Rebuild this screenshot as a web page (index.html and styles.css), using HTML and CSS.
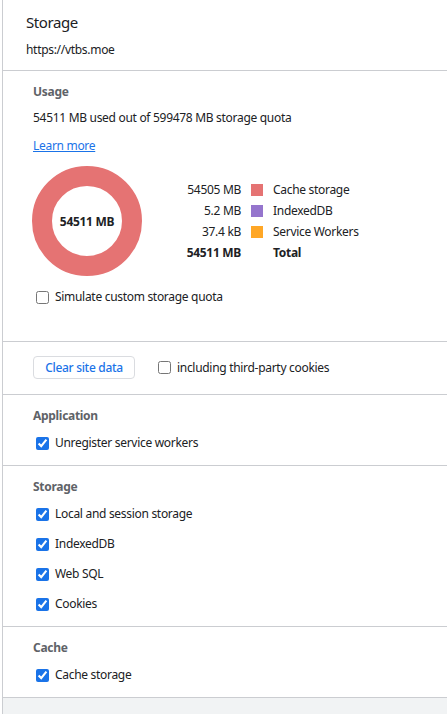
FILE: index.html
```html
<!DOCTYPE html>
<html>
<head>
<meta charset="utf-8">
<link rel="stylesheet" href="styles.css">
</head>
<body>
<div class="frame">
  <div class="report">
    <header class="report-header">
      <div class="report-title">Storage</div>
      <div class="report-url">https://vtbs.moe</div>
    </header>

    <section class="section usage">
      <div class="section-title">Usage</div>
      <div class="row text-row">54511 MB used out of 599478 MB storage quota</div>
      <div class="row link-row"><a class="link" href="#">Learn more</a></div>
      <div class="chart-row">
        <div class="donut"><span class="donut-label">54511 MB</span></div>
        <div class="legend">
          <span class="lv">54505 MB</span><span class="sw sw-cache"></span><span class="ll">Cache storage</span>
          <span class="lv">5.2 MB</span><span class="sw sw-idb"></span><span class="ll">IndexedDB</span>
          <span class="lv">37.4 kB</span><span class="sw sw-sw"></span><span class="ll">Service Workers</span>
          <span class="lv total">54511 MB</span><span class="sw"></span><span class="ll total">Total</span>
        </div>
      </div>
      <label class="row check-row quota-row"><input type="checkbox"><span>Simulate custom storage quota</span></label>
    </section>

    <section class="section clear">
      <button class="btn">Clear site data</button>
      <label class="check-row third"><input type="checkbox"><span>including third-party cookies</span></label>
    </section>

    <section class="section">
      <div class="section-title">Application</div>
      <div class="list">
        <label class="row check-row"><input type="checkbox" checked><span>Unregister service workers</span></label>
      </div>
    </section>

    <section class="section">
      <div class="section-title">Storage</div>
      <div class="list">
        <label class="row check-row"><input type="checkbox" checked><span>Local and session storage</span></label>
        <label class="row check-row"><input type="checkbox" checked><span>IndexedDB</span></label>
        <label class="row check-row"><input type="checkbox" checked><span>Web SQL</span></label>
        <label class="row check-row"><input type="checkbox" checked><span>Cookies</span></label>
      </div>
    </section>

    <section class="section">
      <div class="section-title">Cache</div>
      <div class="list">
        <label class="row check-row"><input type="checkbox" checked><span>Cache storage</span></label>
      </div>
    </section>
  </div>
</div>
</body>
</html>
```

FILE: styles.css
```css
html, body {
  margin: 0;
  padding: 0;
  height: 100%;
}
body {
  background: #ffffff;
  font-family: "Segoe UI", "Noto Sans", "Open Sans", sans-serif;
  font-size: 12px;
  letter-spacing: -0.3px;
  color: #202124;
}
.frame {
  margin-left: 2px;
  min-height: 100%;
  border-left: 1px solid #cbcdd1;
  background: #f1f3f4;
  box-sizing: border-box;
}
.report {
  background: #ffffff;
}
.report-header {
  height: 71px;
  box-sizing: border-box;
  padding: 12px 23px 0;
  border-bottom: 1px solid #cbcdd1;
}
.report-title {
  font-size: 15px;
  letter-spacing: -0.4px;
  line-height: 20px;
  height: 20px;
}
.report-url {
  margin-top: 8px;
  line-height: 20px;
}
.section {
  padding: 11px 30px 12px;
  border-bottom: 1px solid #cbcdd1;
}
.section-title {
  font-weight: bold;
  color: #5f6368;
  line-height: 20px;
  height: 20px;
}
.row {
  line-height: 20px;
  height: 20px;
}
.text-row {
  margin-top: 6px;
}
.link-row {
  margin-top: 8px;
}
.link {
  color: #1a73e8;
  text-decoration: underline;
}
.chart-row {
  display: flex;
  align-items: center;
  margin-top: 10px;
}
.donut {
  width: 70px;
  height: 70px;
  border: 20px solid #e57373;
  border-radius: 50%;
  display: flex;
  align-items: center;
  justify-content: center;
  flex: none;
  margin-left: -1px;
}
.donut-label {
  font-weight: bold;
  white-space: nowrap;
}
.legend {
  display: grid;
  grid-template-columns: 80px 12px auto;
  grid-auto-rows: 21px;
  column-gap: 10px;
  align-items: center;
  margin-left: 19px;
}
.lv {
  text-align: right;
  white-space: nowrap;
}
.ll {
  white-space: nowrap;
}
.total {
  font-weight: bold;
}
.sw {
  width: 12px;
  height: 12px;
}
.sw-cache { background: #e57373; }
.sw-idb { background: #9575cd; }
.sw-sw { background: #ffa726; }
.check-row {
  display: flex;
  align-items: center;
}
.check-row input {
  width: 13px;
  height: 13px;
  margin: 0 6px 0 3px;
  accent-color: #1a73e8;
  flex: none;
}
.quota-row {
  margin-top: 11px;
  margin-bottom: 22px;
}
.clear {
  display: flex;
  align-items: center;
  padding-top: 14px;
  padding-bottom: 15px;
}
.btn {
  width: 102px;
  height: 23px;
  box-sizing: border-box;
  border: 1px solid #dadce0;
  border-radius: 4px;
  background: #ffffff;
  color: #1a73e8;
  font-family: inherit;
  font-size: 12px;
  letter-spacing: -0.3px;
  font-weight: 500;
  padding: 0;
}
.third {
  margin-left: 20px;
}
.list {
  display: flex;
  flex-direction: column;
  gap: 10px;
  margin-top: 7px;
}
```
